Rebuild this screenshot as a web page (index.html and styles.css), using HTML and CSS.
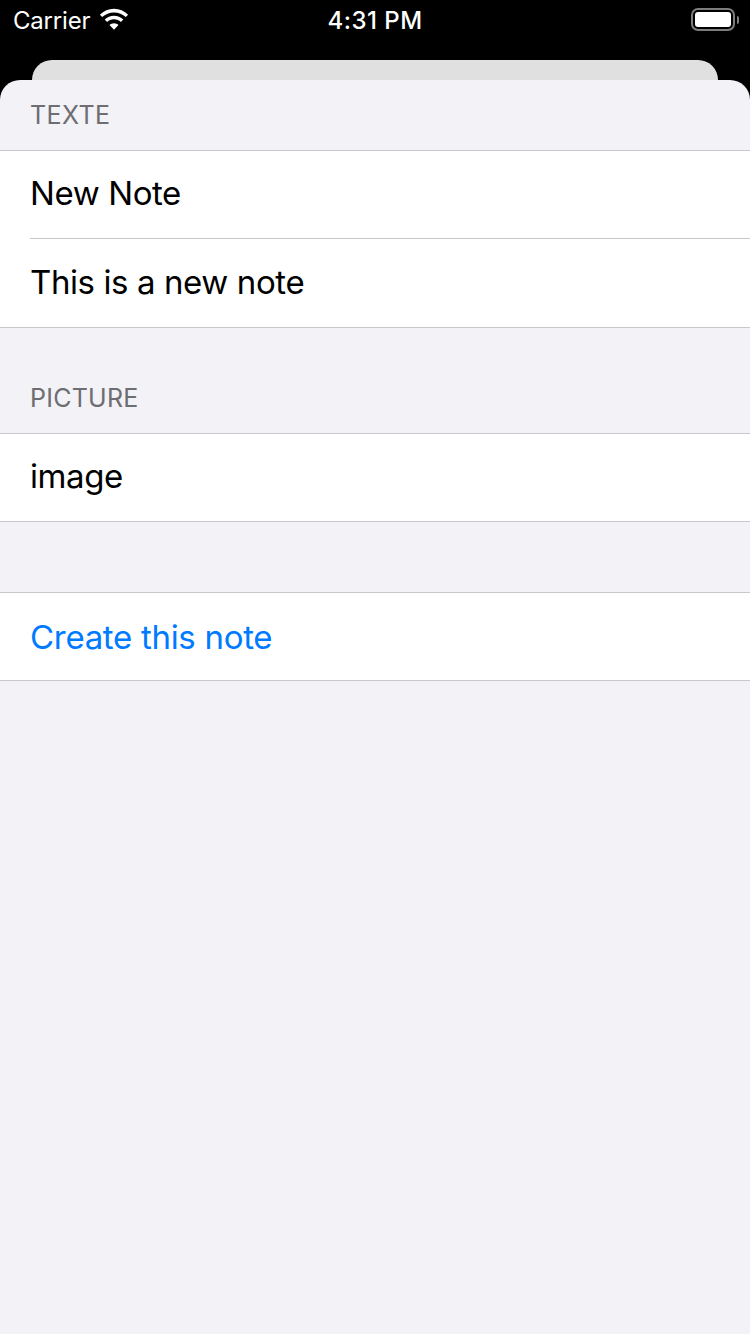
FILE: index.html
```html
<!DOCTYPE html>
<html lang="en">

<head>
    <meta charset="UTF-8">
    <meta name="viewport" content="width=device-width, initial-scale=1.0">
    <title>New Note</title>
    <link rel="stylesheet" href="styles.css">
</head>

<body>
    <header class="status-bar">
        <div class="status-left">
            <span class="carrier">Carrier</span>
            <svg class="wifi" width="34" height="23" viewBox="0 0 32 22">
                <path d="M16 4.200c4.300 0 8.300 1.700 11.300 4.500l2.200-2.300C25.900 2.900 21.200.8 16 .8S6.100 2.900 2.500 6.400l2.200 2.300C7.700 5.900 11.700 4.200 16 4.200z" fill="#fff" />
                <path d="M16 10.700c2.500 0 4.800 1 6.600 2.600l2.300-2.300c-2.400-2.200-5.500-3.600-8.900-3.600s-6.500 1.400-8.900 3.600l2.300 2.300c1.800-1.600 4.100-2.600 6.600-2.600z" fill="#fff" />
                <path d="M16 14.500c-1.700 0-3.200.7-4.300 1.700l4.300 4.500 4.300-4.500c-1.100-1-2.600-1.700-4.300-1.700z" fill="#fff" />
            </svg>
        </div>
        <div class="clock">4:31 PM</div>
        <div class="status-right">
            <div class="battery">
                <div class="battery-level"></div>
            </div>
            <div class="battery-cap"></div>
        </div>
    </header>

    <div class="back-card"></div>

    <main class="sheet">
        <h2 class="section-title first">TEXTE</h2>
        <ul class="group">
            <li class="row">New Note</li>
            <li class="row">This is a new note</li>
        </ul>

        <h2 class="section-title">PICTURE</h2>
        <ul class="group">
            <li class="row">image</li>
        </ul>

        <div class="spacer"></div>
        <ul class="group">
            <li class="row action">Create this note</li>
        </ul>
    </main>
</body>

</html>
```

FILE: styles.css
```css
body {
    font-family: Inter, "Liberation Sans", sans-serif;
    margin: 0;
    padding: 0;
    height: 1334px;
    overflow: hidden;
    display: flex;
    flex-direction: column;
    background-color: black;
}

.status-bar {
    height: 60px;
    flex-shrink: 0;
    display: flex;
    justify-content: space-between;
    align-items: flex-start;
    padding: 0 11px 0 13px;
    box-sizing: border-box;
    color: white;
    position: relative;
}

.status-left {
    display: flex;
    align-items: center;
    gap: 7px;
    height: 41px;
}

.carrier {
    font-size: 24px;
    letter-spacing: -0.2px;
}

.wifi {
    margin-top: -2px;
}

.clock {
    position: absolute;
    left: 0;
    right: 0;
    top: 0;
    line-height: 41px;
    text-align: center;
    font-size: 24px;
    font-weight: 500;
    letter-spacing: 0.5px;
}

.status-right {
    display: flex;
    align-items: center;
    gap: 2px;
    height: 39px;
}

.battery {
    width: 44px;
    height: 23px;
    box-sizing: border-box;
    border: 2px solid #7c7c7c;
    border-radius: 7px;
    padding: 2px;
}

.battery-level {
    height: 100%;
    background-color: white;
    border-radius: 3px;
}

.battery-cap {
    width: 2px;
    height: 8px;
    background-color: #7c7c7c;
    border-radius: 0 2px 2px 0;
}

.back-card {
    height: 20px;
    flex-shrink: 0;
    margin: 0 32px;
    background-color: #e0e0e0;
    border-radius: 20px 20px 0 0;
}

.sheet {
    flex: 1;
    background-color: #f2f2f7;
    border-radius: 20px 20px 0 0;
}

.section-title {
    margin: 0;
    height: 105px;
    box-sizing: border-box;
    padding: 0 30px 20px;
    display: flex;
    align-items: flex-end;
    font-size: 25px;
    font-weight: 400;
    line-height: 30px;
    letter-spacing: 0.25px;
    color: #6d6d72;
}

.section-title.first {
    height: 70px;
    letter-spacing: 0.4px;
}

.group {
    list-style: none;
    margin: 0;
    padding: 0;
    background-color: white;
    border-top: 1px solid #c8c8cc;
    border-bottom: 1px solid #c8c8cc;
}

.row {
    height: 87px;
    box-sizing: border-box;
    padding: 0 0 4px 30px;
    display: flex;
    align-items: center;
    font-size: 33px;
    letter-spacing: -0.4px;
    color: black;
}

.row + .row {
    height: 89px;
    border-top: 1px solid #c8c8cc;
    margin-left: 30px;
    padding: 0 0 2px;
}

.action {
    padding-bottom: 0;
    letter-spacing: -0.3px;
    color: #007aff;
}

.spacer {
    height: 70px;
}
```
